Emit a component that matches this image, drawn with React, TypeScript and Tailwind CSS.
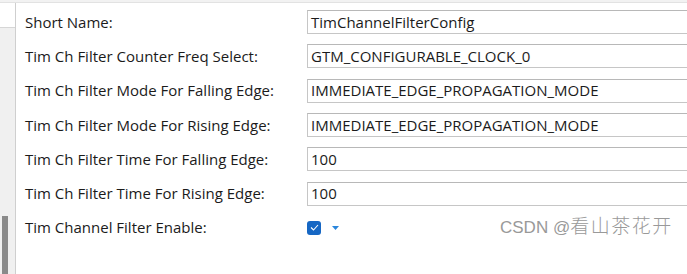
import React from 'react';

const rows = [
    { label: 'Short Name:', value: 'TimChannelFilterConfig' },
    { label: 'Tim Ch Filter Counter Freq Select:', value: 'GTM_CONFIGURABLE_CLOCK_0' },
    { label: 'Tim Ch Filter Mode For Falling Edge:', value: 'IMMEDIATE_EDGE_PROPAGATION_MODE' },
    { label: 'Tim Ch Filter Mode For Rising Edge:', value: 'IMMEDIATE_EDGE_PROPAGATION_MODE' },
    { label: 'Tim Ch Filter Time For Falling Edge:', value: '100' },
    { label: 'Tim Ch Filter Time For Rising Edge:', value: '100' },
];

export default function App() {
    return (
        <div className="relative w-[687px] h-[274px] overflow-hidden bg-white font-['Open_Sans',sans-serif] text-[#1b1b1b]">
            {/* top strip */}
            <div className="h-[3px] bg-[#f2f2f2] border-b border-[#e2e2e2]" />
            <div className="flex h-[271px]">
                {/* left panel with scroll bar */}
                <div className="w-[16px] shrink-0 flex flex-col border-r border-[#cfcfcf] bg-[#f0f0f0]">
                    <div className="h-[25px] bg-white border-b border-[#d6d6d6]" />
                    <div className="flex-1" />
                    <div className="ml-[2px] w-[6px] h-[58px] bg-[#8a8a8a]" />
                </div>
                <div className="flex-1 min-w-0 pl-[9px] pt-[2px]">
                    {rows.map((r) => (
                        <div key={r.label} className="h-[34.3px] flex items-center">
                            <div className="w-[282px] shrink-0 text-[15px] leading-none">{r.label}</div>
                            <div className="w-[400px] shrink-0 h-[24px] border border-[#c6c6c6] border-t-[#b8b8b8] flex items-center pl-[3px] text-[15px]">
                                {r.value}
                            </div>
                        </div>
                    ))}
                    <div className="h-[34.3px] flex items-center">
                        <div className="w-[282px] shrink-0 text-[15px] leading-none">Tim Channel Filter Enable:</div>
                        <div className="flex items-center gap-[11px]">
                            <div className="w-[14px] h-[14px] rounded-[3px] bg-[#1667c4] flex items-center justify-center">
                                <svg width="9" height="7" viewBox="0 0 9 7">
                                    <path d="M1 3.5 L3.5 6 L8 1" stroke="white" strokeWidth="1.1" fill="none" />
                                </svg>
                            </div>
                            <svg width="7" height="4" viewBox="0 0 7 4">
                                <path d="M0 0 L7 0 L3.5 4 Z" fill="#2a86dc" />
                            </svg>
                        </div>
                    </div>
                </div>
            </div>
            <div className="absolute left-[500px] top-[211px] flex items-baseline text-[#999999] font-['Liberation_Sans','Noto_Sans_CJK_SC',sans-serif]">
                <span className="text-[17px]">CSDN @</span>
                <span className="text-[19px] tracking-[1.5px] font-['Noto_Sans_CJK_SC',sans-serif] font-light">看山茶花开</span>
            </div>
        </div>
    );
}
